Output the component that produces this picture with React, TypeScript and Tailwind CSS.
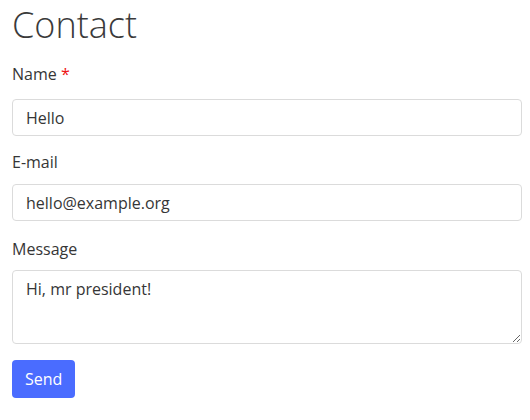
export default function App() {
  const font = { fontFamily: '"Open Sans", "Liberation Sans", sans-serif' };
  return (
    <div className="min-h-screen bg-white pl-3 pr-2 text-[#363636]" style={font}>
      <h1 className="pt-[3px] text-[36px] font-light leading-[44px] text-[#3a3a3a]">Contact</h1>
      <form className="mt-[15px]" onSubmit={(e) => e.preventDefault()}>
        <div className="mb-[14px]">
          <label className="mb-[13px] block text-base leading-6">
            Name <span className="text-[#ee1111]">*</span>
          </label>
          <input
            defaultValue="Hello"
            className="block h-[37px] w-full rounded border border-[#dbdbdb] px-[13px] text-base text-[#363636] outline-none"
          />
        </div>
        <div className="mb-[16px]">
          <label className="mb-[10px] block text-base leading-6">E-mail</label>
          <input
            defaultValue="hello@example.org"
            className="block h-[37px] w-full rounded border border-[#dbdbdb] px-[13px] text-base text-[#363636] outline-none"
          />
        </div>
        <div className="mb-[16px]">
          <label className="mb-[9px] block text-base leading-6">Message</label>
          <textarea
            defaultValue="Hi, mr president!"
            className="block h-[74px] w-full rounded border border-[#dbdbdb] px-[13px] py-[6px] text-base leading-6 text-[#363636] outline-none"
          />
        </div>
        <button
          type="submit"
          className="h-[38px] rounded bg-[#4a6cff] px-[13px] text-base text-white"
        >
          Send
        </button>
      </form>
    </div>
  );
}
